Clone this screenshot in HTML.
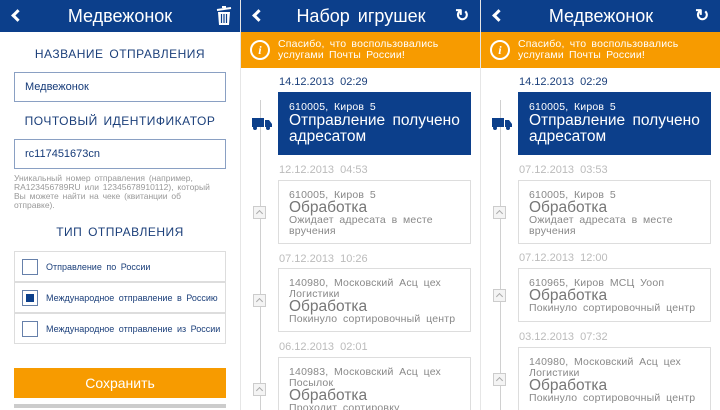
<!DOCTYPE html>
<html><head><meta charset="utf-8"><style>
*{margin:0;padding:0;box-sizing:border-box}
body{width:720px;height:410px;overflow:hidden;background:#fff;font-family:"Liberation Sans",sans-serif;position:relative}
.p{position:absolute;top:0;width:240px;height:410px;overflow:hidden;background:#fff}
.hd{position:absolute;left:0;top:0;width:240px;height:32px;background:#0c3f8b;color:#fff;font-size:18px;text-align:center;line-height:32px;word-spacing:3px}
.bk{position:absolute;left:10px;top:11px;width:9px;height:9px;border-left:3px solid #fff;border-bottom:3px solid #fff;transform:rotate(45deg);margin-left:3px}
.a{position:absolute}
.cap{position:absolute;left:0;width:240px;text-align:center;color:#1b3f7a;font-size:12px;letter-spacing:.5px;word-spacing:2px}
.in{position:absolute;left:14px;width:212px;height:30px;border:1px solid #8aa0c3;color:#153a78;font-size:11px;line-height:28px;padding-left:10px}
.ban{position:absolute;left:0;top:32px;width:240px;height:36px;background:#f79b00;color:#fff;font-size:10.5px;line-height:11px;padding:7px 0 0 37px;word-spacing:2px;letter-spacing:.2px}
.ic{position:absolute;left:9px;top:8px;width:20px;height:20px;border:2px solid #fff;border-radius:50%;font:italic bold 12px "Liberation Serif",serif;text-align:center;line-height:16px}
.vl{position:absolute;left:19px;top:100px;width:1px;height:310px;background:#d0d0d0}
.dt{position:absolute;left:38px;font-size:11px;color:#bbb;word-spacing:3px}
.bx{position:absolute;left:37px;width:193px;border:1px solid #ddd;background:#fff;padding:9px 0 0 10px;color:#888;font-size:10.5px;line-height:11px;word-spacing:2.5px;letter-spacing:.2px}
.bx b{display:block;font-weight:normal;font-size:15.5px;line-height:14px;color:#777;word-spacing:1px;letter-spacing:0}
.bx.on{background:#0c3f8b;border-color:#0c3f8b;color:#fff}
.bx.on b{color:#fff;line-height:16px;word-spacing:3px}
.ch{position:absolute;left:12px;width:13px;height:13px;border:1px solid #ccc;background:#f4f4f4}
.ch:after{content:"";position:absolute;left:3px;top:4px;width:4px;height:4px;border-left:1px solid #aaa;border-top:1px solid #aaa;transform:rotate(45deg)}
.row{position:absolute;left:14px;width:212px;height:31px;border:1px solid #ddd;font-size:9px;color:#1b3f7a;line-height:30px;padding-left:31px;word-spacing:2px}
.cb{position:absolute;left:7px;top:7px;width:16px;height:16px;border:1px solid #6680aa;background:#fff}
</style></head><body>

<div class="p" style="left:0">
<div class="hd"><span class="bk"></span>Медвежонок
<svg class="a" style="left:216px;top:6px" width="16" height="20" viewBox="0 0 16 20"><path d="M1 4 L15 2" stroke="#fff" stroke-width="2"/><rect x="6" y="0" width="4" height="2" fill="#fff"/><path d="M2 6 H14 L13 19 H3 Z" fill="#fff"/><path d="M5.5 8v9M8 8v9M10.5 8v9" stroke="#0c3f8b" stroke-width="1.2"/></svg></div>
<div class="cap" style="top:47px">НАЗВАНИЕ ОТПРАВЛЕНИЯ</div>
<div class="in" style="top:72px">Медвежонок</div>
<div class="cap" style="top:114px">ПОЧТОВЫЙ ИДЕНТИФИКАТОР</div>
<div class="in" style="top:139px">rc117451673cn</div>
<div class="a" style="left:14px;top:174px;width:210px;font-size:8.5px;line-height:9px;color:#999;word-spacing:1.5px">Уникальный номер отправления (например, RA123456789RU или 12345678910112), который Вы можете найти на чеке (квитанции об отправке).</div>
<div class="cap" style="top:225px">ТИП ОТПРАВЛЕНИЯ</div>
<div class="row" style="top:251px"><span class="cb"></span>Отправление по России</div>
<div class="row" style="top:282px"><span class="cb"><span class="a" style="left:3px;top:3px;width:8px;height:8px;background:#0c3f8b"></span></span>Международное отправление в Россию</div>
<div class="row" style="top:313px"><span class="cb"></span>Международное отправление из России</div>
<div class="a" style="left:14px;top:368px;width:212px;height:30px;background:#f79b00;color:#fff;font-size:14px;text-align:center;line-height:30px">Сохранить</div>
<div class="a" style="left:14px;top:404px;width:212px;height:4px;background:#ccc"></div>
</div>

<div class="p" style="left:240px;border-left:1px solid #e6e6e6">
<div class="hd"><span class="bk"></span>Набор игрушек
<span class="a" style="left:214px;top:0;font-size:17px;font-weight:bold">&#x21BB;</span></div>
<div class="ban"><span class="ic">i</span>Спасибо, что воспользовались<br>услугами Почты России!</div>
<div class="vl"></div>
<svg class="a" style="left:11px;top:118px" width="20" height="12" viewBox="0 0 20 12"><rect x="0" y="0" width="12" height="9" fill="#0c3f8b"/><path d="M13 2h4l3 4v3h-7z" fill="#0c3f8b"/><circle cx="3" cy="10" r="2" fill="#0c3f8b"/><circle cx="16" cy="10" r="2" fill="#0c3f8b"/></svg>
<div class="dt" style="top:76px;color:#1b3f7a">14.12.2013 02:29</div>
<div class="bx on" style="top:92px;height:63px">610005, Киров 5<b>Отправление получено адресатом</b></div>
<div class="dt" style="top:164px">12.12.2013 04:53</div>
<div class="bx" style="top:180px;height:64px">610005, Киров 5<b>Обработка</b>Ожидает адресата в месте вручения</div>
<div class="ch" style="top:206px"></div>
<div class="dt" style="top:253px">07.12.2013 10:26</div>
<div class="bx" style="top:268px;height:64px">140980, Московский Асц цех Логистики<b>Обработка</b>Покинуло сортировочный центр</div>
<div class="ch" style="top:294px"></div>
<div class="dt" style="top:341px">06.12.2013 02:01</div>
<div class="bx" style="top:357px;height:64px">140983, Московский Асц цех Посылок<b>Обработка</b>Проходит сортировку</div>
<div class="ch" style="top:383px"></div>
</div>

<div class="p" style="left:480px;border-left:1px solid #e6e6e6">
<div class="hd"><span class="bk"></span>Медвежонок
<span class="a" style="left:214px;top:0;font-size:17px;font-weight:bold">&#x21BB;</span></div>
<div class="ban"><span class="ic">i</span>Спасибо, что воспользовались<br>услугами Почты России!</div>
<div class="vl"></div>
<svg class="a" style="left:11px;top:118px" width="20" height="12" viewBox="0 0 20 12"><rect x="0" y="0" width="12" height="9" fill="#0c3f8b"/><path d="M13 2h4l3 4v3h-7z" fill="#0c3f8b"/><circle cx="3" cy="10" r="2" fill="#0c3f8b"/><circle cx="16" cy="10" r="2" fill="#0c3f8b"/></svg>
<div class="dt" style="top:76px;color:#1b3f7a">14.12.2013 02:29</div>
<div class="bx on" style="top:92px;height:63px">610005, Киров 5<b>Отправление получено адресатом</b></div>
<div class="dt" style="top:164px">07.12.2013 03:53</div>
<div class="bx" style="top:180px;height:64px">610005, Киров 5<b>Обработка</b>Ожидает адресата в месте вручения</div>
<div class="ch" style="top:206px"></div>
<div class="dt" style="top:252px">07.12.2013 12:00</div>
<div class="bx" style="top:268px;height:54px">610965, Киров МСЦ Уооп<b>Обработка</b>Покинуло сортировочный центр</div>
<div class="ch" style="top:289px"></div>
<div class="dt" style="top:331px">03.12.2013 07:32</div>
<div class="bx" style="top:347px;height:64px">140980, Московский Асц цех Логистики<b>Обработка</b>Покинуло сортировочный центр</div>
<div class="ch" style="top:373px"></div>
</div>
</body></html>
